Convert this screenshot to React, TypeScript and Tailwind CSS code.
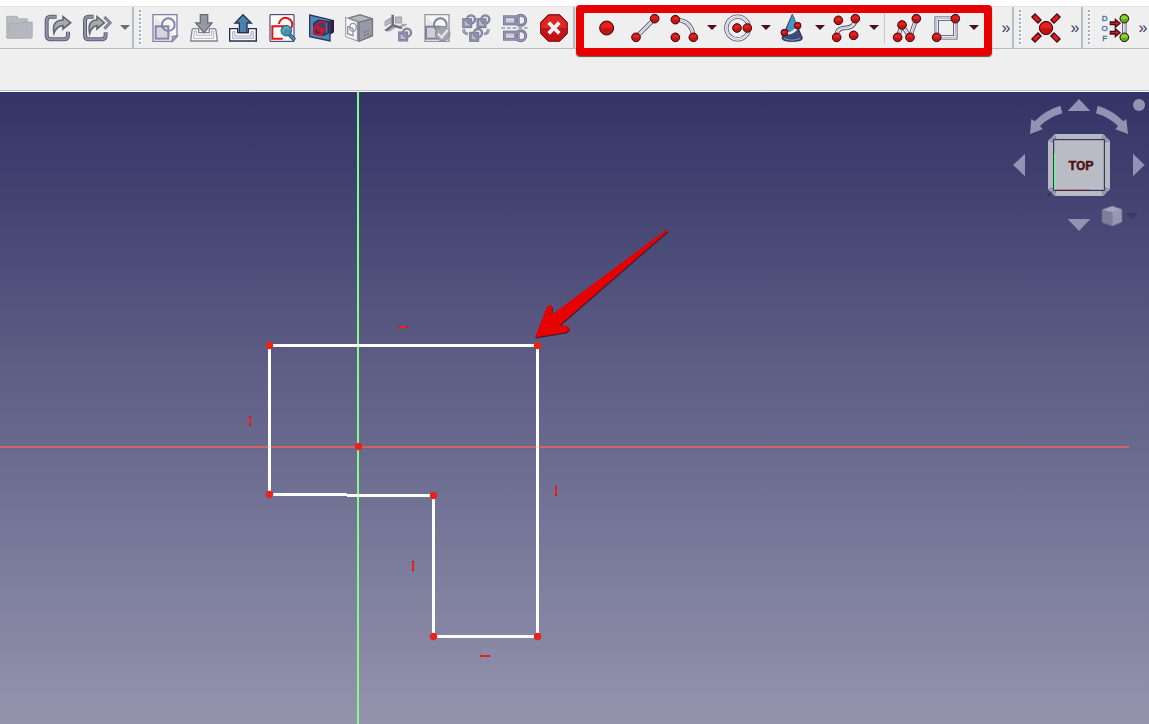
import React from 'react';

interface IconProps {
  children: React.ReactNode;
}

const Icon: React.FC<IconProps> = ({ children }) => (
  <svg viewBox="0 0 84 84" className="h-7 w-7 shrink-0 overflow-visible" fill="none" aria-hidden="true">
    {children}
  </svg>
);

interface DotProps {
  x: number;
  y: number;
  r?: number;
  color?: string;
  shade?: string;
}

const Dot: React.FC<DotProps> = ({ x, y, r = 13, color = '#e8201c', shade = '#c01414' }) => (
  <g>
    <circle cx={x} cy={y} r={r} fill={shade} stroke="#3a0a10" strokeWidth="3" />
    <path d={`M${x - r + 3} ${y + 1}a${r - 3} ${r - 3} 0 0 1 ${2 * r - 6} 0z`} fill={color} />
  </g>
);

const Tube: React.FC<{ d: string }> = ({ d }) => (
  <g strokeLinejoin="miter">
    <path d={d} stroke="#4c4c6a" strokeWidth="13" />
    <path d={d} stroke="#f4f4f6" strokeWidth="8" />
    <path d={d} stroke="#9a9aa8" strokeWidth="2" />
  </g>
);

const MiniSketch: React.FC<{ x: number; y: number }> = ({ x, y }) => (
  <g transform={`translate(${x} ${y})`}>
    <rect x="3" y="14" width="23" height="23" fill="#bcbcc8" stroke="#74748e" strokeWidth="7" />
    <circle cx="26" cy="14" r="12" stroke="#74748e" strokeWidth="7" />
    <rect x="3" y="14" width="23" height="23" stroke="#9494b8" strokeWidth="3" />
    <circle cx="26" cy="14" r="12" stroke="#9494b8" strokeWidth="3" />
  </g>
);

const Page: React.FC<{ stroke: string }> = ({ stroke }) => (
  <g>
    <path d="M6 2H78V68L64 82H6z" fill="#f5f5f5" stroke={stroke} strokeWidth="4" />
    <path d="M12 10L70 68H12z" fill="#e6e6e8" />
    <path d="M78 66L64 68V82z" fill="#c9c9d4" stroke={stroke} strokeWidth="4" />
  </g>
);

const icons: Record<string, React.ReactNode> = {
  open: (
    <>
      <path d="M5 72V7H37V14H67V70z" fill="#b9bbbf" stroke="#a4a6aa" strokeWidth="2" />
      <path d="M13 66V29H43L48 24H82V68Q82 73 77 73H10Q5 73 5 68" fill="#b4b8be" stroke="#a2a6ac" strokeWidth="2" />
    </>
  ),
  undo: (
    <>
      <path d="M38 8H20Q8 8 8 20V64Q8 76 20 76H60Q72 76 72 64V53" stroke="#606070" strokeWidth="12" />
      <path d="M38 8H20Q8 8 8 20V64Q8 76 20 76H60Q72 76 72 64V53" stroke="#9292b0" strokeWidth="6" />
      <path d="M57 8L80 26L57 45V35Q38 36 30 58Q22 19 57 18z" fill="#a8aaac" stroke="#66676c" strokeWidth="5" />
    </>
  ),
  redo: (
    <>
      <path d="M32 8H17Q6 8 6 20V64Q6 76 17 76H55Q68 76 68 64V55" stroke="#606070" strokeWidth="12" />
      <path d="M32 8H17Q6 8 6 20V64Q6 76 17 76H55Q68 76 68 64V55" stroke="#9292b0" strokeWidth="6" />
      <path d="M42 8L64 26L42 45V35Q27 36 20 58Q12 19 42 18z" fill="#a8aaac" stroke="#66676c" strokeWidth="5" />
      <path d="M64 9L81 26L64 44" stroke="#70708a" strokeWidth="9" />
      <path d="M64 9L81 26L64 44" stroke="#acacc2" strokeWidth="3" />
    </>
  ),
  sketch: (
    <>
      <Page stroke="#8080a4" />
      <rect x="14" y="37" width="38" height="37" fill="#d6d6dc" stroke="#8484a8" strokeWidth="6" />
      <circle cx="52" cy="32" r="19" stroke="#8484a8" strokeWidth="6" />
    </>
  ),
  import: (
    <>
      <path d="M11 44H26V56H58V44H73Q77 44 78 49L82 81H2L6 49Q6 44 11 44z" fill="#fafafa" stroke="#84849a" strokeWidth="4" />
      <path d="M13 51H19V64H65V51H71V73H11z" stroke="#b5b5c2" strokeWidth="3" />
      <path d="M31 2H53V27H66L42 56L17 27H31z" fill="#9898a4" stroke="#6e6e7c" strokeWidth="4" />
    </>
  ),
  export: (
    <>
      <path d="M2 44H26V56H58V44H82V81H2z" fill="#fafafa" stroke="#2b2b58" strokeWidth="4" />
      <path d="M11 53H18V66H66V53H73V73H11z" fill="#ededf0" stroke="#8e8ea4" strokeWidth="2" />
      <path d="M42 2L67 27H54V56H31V27H18z" fill="#4a84a8" stroke="#26305c" strokeWidth="4" />
    </>
  ),
  viewSketch: (
    <>
      <path d="M6 2H78V82H6z" fill="#fff" stroke="#2c2c60" strokeWidth="3" />
      <path d="M44 74H13V37H52V48M33 30A20 20 0 1 1 70 42" stroke="#e81010" strokeWidth="6" />
      <path d="M64 61L80 78" stroke="#28466e" strokeWidth="12" />
      <path d="M65 62L79 77" stroke="#4a93bd" strokeWidth="6" />
      <circle cx="55" cy="50" r="16" fill="#4790b0" stroke="#2d5d83" strokeWidth="3" />
      <path d="M46 52A10 10 0 0 1 64 45" stroke="#73dba5" strokeWidth="4" strokeDasharray="5 3" />
    </>
  ),
  viewSection: (
    <>
      <path d="M60 17L79 20V54L66 62z" fill="#54163a" stroke="#20204c" strokeWidth="4" />
      <path d="M8 3L69 17V81L8 68z" fill="#4d8ab4" stroke="#28386a" strokeWidth="4" />
      <path d="M20 27L34 18L66 23V56L52 64L20 60z" fill="#34446e" stroke="#25254e" strokeWidth="3" />
      <path d="M22 39L44 43V64L22 60z" stroke="#df1328" strokeWidth="6" />
      <ellipse cx="44" cy="37" rx="13" ry="14" stroke="#df1328" strokeWidth="5" />
      <path d="M27 45V57H39" stroke="#701830" strokeWidth="4" />
      <path d="M59 26V56" stroke="#4780a8" strokeWidth="3" />
    </>
  ),
  mapSketch: (
    <>
      <path d="M10 12L45 2L83 14V66L42 82L16 70z" fill="#909098" stroke="#72727c" strokeWidth="3" />
      <path d="M12 12L45 3L80 14L42 25z" fill="#b7b7bb" stroke="#777781" strokeWidth="3" />
      <path d="M42 25L82 15V65L42 82z" fill="#9898a6" stroke="#71717e" strokeWidth="3" />
      <path d="M2 10L37 24V81L2 68z" fill="#f6f6f8" stroke="#9494a2" strokeWidth="3" />
      <path d="M8 38L24 44V65L8 59z" stroke="#9494a2" strokeWidth="4" />
      <ellipse cx="24" cy="40" rx="10" ry="12" stroke="#9494a2" strokeWidth="4" />
      <path d="M59 52v4M69 48v4M59 62v4M69 58v4" stroke="#696972" strokeWidth="4" />
    </>
  ),
  reorient: (
    <>
      <path d="M3 22L20 12V27L3 36zM34 9H53V27H34zM2 48L20 38L33 40L18 51zM54 31H68L62 36H50z" fill="#b8b8bc" stroke="#a0a0a8" strokeWidth="3" />
      <path d="M26 2V34L54 42M26 34L6 50" stroke="#70707e" strokeWidth="8" />
      <MiniSketch x={43} y={42} />
    </>
  ),
  validate: (
    <>
      <path d="M6 2H78V82H6z" fill="#f5f5f5" stroke="#9494a6" strokeWidth="4" />
      <path d="M12 10L70 68H12z" fill="#e6e6e8" />
      <rect x="9" y="38" width="42" height="36" fill="#d0d0d4" stroke="#80809c" strokeWidth="6" />
      <circle cx="52" cy="32" r="19" stroke="#80809c" strokeWidth="6" />
      <circle cx="59" cy="59" r="22" fill="#a2a2a9" stroke="#8b8b96" strokeWidth="3" />
      <path d="M45 59L56 70L75 47" stroke="#e1e1e4" strokeWidth="8" />
    </>
  ),
  merge: (
    <>
      <MiniSketch x={1} y={2} />
      <MiniSketch x={44} y={2} />
      <MiniSketch x={22} y={43} />
      <path d="M5 45Q4 59 18 60M79 45Q80 58 66 60" stroke="#84849e" strokeWidth="8" />
      <path d="M5 45Q4 59 18 60M79 45Q80 58 66 60" stroke="#b2b2c4" strokeWidth="3" />
    </>
  ),
  mirror: (
    <>
      {[19, 65].map((y) => (
        <g key={y}>
          <rect x="10" y={y - 11} width="42" height="22" fill="#cfcfd8" stroke="#74748e" strokeWidth="8" />
          <circle cx="59" cy={y} r="15" stroke="#74748e" strokeWidth="9" />
          <rect x="10" y={y - 11} width="42" height="22" stroke="#9494b8" strokeWidth="4" />
          <circle cx="59" cy={y} r="15" stroke="#9494b8" strokeWidth="4" />
        </g>
      ))}
      <path d="M1 42H84" stroke="#9a9aac" strokeWidth="5" strokeDasharray="11 6" />
    </>
  ),
  stop: (
    <>
      <path d="M25 2H59L82 25V59L59 82H25L2 59V25z" fill="#be1418" stroke="#82080c" strokeWidth="3" />
      <path d="M26 5H58L79 26V42H5V26z" fill="#dc2724" />
      <path d="M26 26L58 58M58 26L26 58" stroke="#f5f0f0" strokeWidth="11" />
    </>
  ),
  point: <Dot x={44} y={42} r={21} />,
  line: (
    <>
      <Tube d="M15 70L71 14" />
      <Dot x={15} y={70} />
      <Dot x={71} y={14} />
    </>
  ),
  arc: (
    <>
      <Tube d="M16 17Q67 19 70 70" />
      <Dot x={16} y={17} />
      <Dot x={16} y={70} />
      <Dot x={70} y={70} />
    </>
  ),
  circle: (
    <>
      <circle cx="41" cy="42" r="34" stroke="#55557a" strokeWidth="13" />
      <circle cx="41" cy="42" r="34" stroke="#f2f2f4" strokeWidth="8" />
      <circle cx="41" cy="42" r="34" stroke="#a8a8b4" strokeWidth="2" />
      <Dot x={39} y={42} />
      <Dot x={70} y={42} />
    </>
  ),
  conic: (
    <>
      <path d="M43 1L73 72Q74 82 43 82T12 72z" fill="#3f4b79" stroke="#252b52" strokeWidth="3" />
      <path d="M43 2L26 45Q42 60 62 43z" fill="#4c96bd" />
      <path d="M18 73Q42 84 67 73" stroke="#69a9ca" strokeWidth="3" />
      <path d="M19 56Q48 63 59 35" stroke="#e6e6e9" strokeWidth="8" />
      <Dot x={19} y={56} r={10} />
      <Dot x={59} y={35} r={10} />
    </>
  ),
  bspline: (
    <>
      <Tube d="M13 70Q13 43 36 42Q70 41 70 14" />
      <Dot x={19} y={19} />
      <Dot x={70} y={14} />
      <Dot x={14} y={70} />
      <Dot x={65} y={64} />
    </>
  ),
  polyline: (
    <>
      <Tube d="M14 70L27 33L51 70L70 14" />
      <Dot x={14} y={70} />
      <Dot x={27} y={33} />
      <Dot x={51} y={70} />
      <Dot x={70} y={14} />
    </>
  ),
  rectangle: (
    <>
      <Tube d="M14 14H70V70H14z" />
      <Dot x={14} y={70} />
      <Dot x={70} y={14} />
    </>
  ),
  coincident: (
    <>
      <path d="M3 3L24 24M81 3L60 24M3 81L24 60M81 81L60 60" stroke="#3a0a10" strokeWidth="17" />
      <path d="M6 6L21 21M78 6L63 21M6 78L21 63M78 78L63 63" stroke="#df1c1c" strokeWidth="11" />
      <Dot x={42} y={42} r={20} />
    </>
  ),
  dof: (
    <>
      <Tube d="M70 13V70" />
      <g
        fill="#3d6ba0"
        stroke="#3d6ba0"
        strokeWidth="1"
        fontFamily="Liberation Sans, sans-serif"
        fontSize="24"
        textAnchor="middle"
      >
        <text x="11" y="22">D</text>
        <text x="11" y="51">O</text>
        <text x="11" y="80">F</text>
      </g>
      <path d="M28 24H43V16L57 28L43 40V32H28zM28 52H43V44L57 56L43 68V60H28z" fill="#d81818" stroke="#45101a" strokeWidth="4" />
      <Dot x={70} y={14} color="#80d830" shade="#5cac1c" />
      <Dot x={70} y={70} color="#80d830" shade="#5cac1c" />
    </>
  ),
};

const ToolButton: React.FC<{ icon: string; label: string; fluid?: boolean }> = ({ icon, label, fluid }) => (
  <button
    type="button"
    aria-label={label}
    title={label}
    className={`flex h-full items-center ${fluid ? 'flex-1 justify-center' : 'w-[39px] shrink-0 pl-[5px]'}`}
  >
    <Icon>{icons[icon]}</Icon>
  </button>
);

const DropButton: React.FC<{ label: string; dark?: boolean }> = ({ label, dark }) => (
  <button type="button" aria-label={label} className="flex h-full w-[15px] shrink-0 items-center justify-center">
    <svg viewBox="0 0 10 5" className={`h-[5px] w-[10px] ${dark ? 'fill-[#481018]' : 'fill-[#6c6c74]'}`}>
      <path d="M0 0H10L5 5z" />
    </svg>
  </button>
);

const MoreButton: React.FC<{ label: string }> = ({ label }) => (
  <button
    type="button"
    aria-label={label}
    className="ml-auto h-full w-3 shrink-0 text-center text-base leading-none text-[#3c3c64]"
  >
    »
  </button>
);

const Grip: React.FC = () => (
  <svg viewBox="0 0 3 35" className="h-[35px] w-[3px] shrink-0" aria-hidden="true">
    <path d="M2 1V35" stroke="#ffffff" strokeWidth="2" strokeDasharray="2 2" />
    <path d="M1 0V35" stroke="#a9adb5" strokeWidth="2" strokeDasharray="2 2" />
  </svg>
);

const barClass = 'flex shrink-0 items-center border-r-2 border-[#b8bcc4]';

const sketchTools = [
  { icon: 'sketch', label: 'Create sketch' },
  { icon: 'import', label: 'Edit sketch' },
  { icon: 'export', label: 'Leave sketch' },
  { icon: 'viewSketch', label: 'View sketch' },
  { icon: 'viewSection', label: 'View section' },
  { icon: 'mapSketch', label: 'Map sketch to face' },
  { icon: 'reorient', label: 'Reorient sketch' },
  { icon: 'validate', label: 'Validate sketch' },
  { icon: 'merge', label: 'Merge sketches' },
  { icon: 'mirror', label: 'Mirror sketch' },
  { icon: 'stop', label: 'Stop operation' },
];

const Toolbars: React.FC = () => (
  <header className="shrink-0 bg-[#efefef]">
    <div className="h-1.5 bg-white"></div>
    <div className="flex h-[43px] border-y border-t-[#e4e4e4] border-b-[#b8bcc4]">
      <div role="toolbar" aria-label="File" className={barClass}>
        <ToolButton icon="open" label="Open" />
        <ToolButton icon="undo" label="Undo" />
        <ToolButton icon="redo" label="Redo" />
        <DropButton label="Redo list" />
      </div>

      <div role="toolbar" aria-label="Sketcher" className={`${barClass} w-[441px] pl-[5px]`}>
        <Grip />
        <div className="flex h-full flex-1 pl-1">
          {sketchTools.map((tool) => (
            <ToolButton key={tool.icon} icon={tool.icon} label={tool.label} fluid />
          ))}
        </div>
      </div>

      <div role="toolbar" aria-label="Geometries" className={`${barClass} w-[439px] pl-3`}>
        <div className="relative flex h-full items-center">
          <ToolButton icon="point" label="Point" />
          <ToolButton icon="line" label="Line" />
          <ToolButton icon="arc" label="Arc" />
          <DropButton label="Arc options" dark />
          <ToolButton icon="circle" label="Circle" />
          <DropButton label="Circle options" dark />
          <ToolButton icon="conic" label="Conic" />
          <DropButton label="Conic options" dark />
          <ToolButton icon="bspline" label="B-spline" />
          <DropButton label="B-spline options" dark />
          <div className="mx-[3px] h-8 w-px bg-[#c8c8cc]"></div>
          <ToolButton icon="polyline" label="Polyline" />
          <ToolButton icon="rectangle" label="Rectangle" />
          <DropButton label="Rectangle options" dark />
          <div className="pointer-events-none absolute -top-0.5 -right-[11px] -bottom-2 -left-[11px] z-10 rounded border-8 border-[#e60000] shadow-[0_1px_1px_#555555]"></div>
        </div>
        <MoreButton label="More geometries" />
      </div>

      <div role="toolbar" aria-label="Constraints" className={`${barClass} w-[69px] pl-[5px]`}>
        <Grip />
        <div className="flex h-full pl-[5px]">
          <ToolButton icon="coincident" label="Constrain coincident" />
        </div>
        <MoreButton label="More constraints" />
      </div>

      <div role="toolbar" aria-label="Sketcher tools" className="flex flex-1 items-center pl-[5px]">
        <Grip />
        <div className="flex h-full pl-[5px]">
          <ToolButton icon="dof" label="Degrees of freedom" />
        </div>
        <MoreButton label="More tools" />
      </div>
    </div>
    <div className="h-[42px] border-b border-[#b8bcc4]"></div>
    <div className="h-px bg-white"></div>
  </header>
);

const vertices = [
  [269.5, 253.5],
  [537.5, 253.5],
  [537.5, 544.5],
  [433.5, 544.5],
  [433.5, 403.5],
  [269.5, 402.5],
  [358.5, 354.5],
];

// x, y, width, height of the horizontal and vertical constraint marks
const marks = [
  [398, 234, 10, 2],
  [249, 324, 2, 10],
  [555, 394, 2, 10],
  [412, 469, 2, 10],
  [480, 563, 10, 2],
];

const arrowPath =
  'M535 245.5L546.500 216Q548 212.500 551 213.500Q553.300 214.500 552.500 217L551.500 223L666.500 137.500Q668 137.500 667.500 139.500L559.500 233.500L566 233.500Q569.300 234 569.300 237Q569 239.500 566 240.500z';

const Drawing: React.FC = () => (
  <svg className="absolute inset-0 h-full w-full" fill="none" aria-label="Sketch">
    <path d="M0 355H1129" stroke="#cf6666" strokeWidth="2" />
    <line x1="358" y1="0" x2="358" y2="100%" stroke="#80ff80" strokeWidth="2" />
    <path d="M347 402.5H269.5V253.5H537.5V544.5H433.5V403.5H347" stroke="#ffffff" strokeWidth="3" />
    {vertices.map(([x, y]) => (
      <circle key={`${x}-${y}`} cx={x} cy={y} r="3.7" fill="#e8231c" />
    ))}
    {marks.map(([x, y, w, h]) => (
      <g key={`${x}-${y}`}>
        <rect x={x} y={y} width={w} height={h} fill="#a81c20" />
        <rect x={w > h ? x + 1 : x} y={w > h ? y : y + 1} width={w > h ? 8 : 2} height={w > h ? 2 : 8} fill="#ee2018" />
      </g>
    ))}
    <path d={arrowPath} transform="translate(0.5 1)" fill="#30203a" />
    <path d={arrowPath} fill="#e60000" />
  </svg>
);

const NavigationCube: React.FC = () => (
  <svg viewBox="0 6 447 444" className="absolute top-0 right-0 h-[148px] w-[149px]" fill="none" aria-label="Navigation cube">
    <g fill="#9292b2">
      <path d="M237 27L271 63H203z" />
      <path d="M237 423L271 387H203z" />
      <path d="M39 225L75 191V259z" />
      <path d="M434 225L399 191V259z" />
      <circle cx="417" cy="45" r="18" />
      <path d="M181 47L187 70Q147 82 120 108L128 118L90 132L94 87L104 94Q136 60 181 47z" />
      <path d="M293 47L288 70Q327 82 354 108L346 118L384 132L379 87L370 94Q338 60 293 47z" />
    </g>
    <path d="M142 320L160 300" stroke="#2b2b5c" strokeWidth="4" />
    <path d="M165 132H309L330 153V297L309 318H165L144 297V153z" fill="#b7bac3" />
    <path
      d="M144 153L165 132L170 149H161V158zM330 153L309 132L304 149H313V158zM144 297L165 318L170 301H161V292zM330 297L309 318L304 301H313V292z"
      fill="#7c809c"
    />
    <path d="M148 150L162 150V136M326 150L312 150V136M148 300L162 300V314M326 300L312 300V314" stroke="#c2c4cc" strokeWidth="3" />
    <rect x="161" y="149" width="152" height="152" fill="#b9bcc4" stroke="#202050" strokeWidth="3" />
    <path d="M166 292H311M166 310H307" stroke="#d3d5da" strokeWidth="2" strokeDasharray="3 6" />
    <path d="M165 192V299" stroke="#70f890" strokeWidth="5" />
    <path d="M164 301H270" stroke="#651b25" strokeWidth="3" />
    <text
      x="243"
      y="241"
      textAnchor="middle"
      fill="#4c1016"
      stroke="#4c1016"
      strokeWidth="2"
      fontFamily="Roboto, sans-serif"
      fontWeight="500"
      fontSize="39"
    >
      TOP
    </text>
    <path d="M337 348L366 358V396L337 408L306 397V359z" fill="#8888a2" />
    <path d="M337 348L366 358L337 367L306 359z" fill="#a5a5bb" />
    <path d="M337 367L366 358V396L337 408z" fill="#9797af" />
    <path d="M306 359L337 367V408L306 397z" fill="#7d7d99" />
    <path d="M306 359L337 348L366 358V396L337 408L306 397z" stroke="#68688a" strokeWidth="2" />
    <path d="M379 369H414L397 387z" fill="#383868" />
  </svg>
);

export default function App() {
  return (
    <div className="flex min-h-screen flex-col overflow-hidden font-['Liberation_Sans',sans-serif]">
      <Toolbars />
      <main className="relative flex-1 bg-linear-to-b/srgb from-[#333366] to-[#9494ae]">
        <Drawing />
        <NavigationCube />
      </main>
    </div>
  );
}
